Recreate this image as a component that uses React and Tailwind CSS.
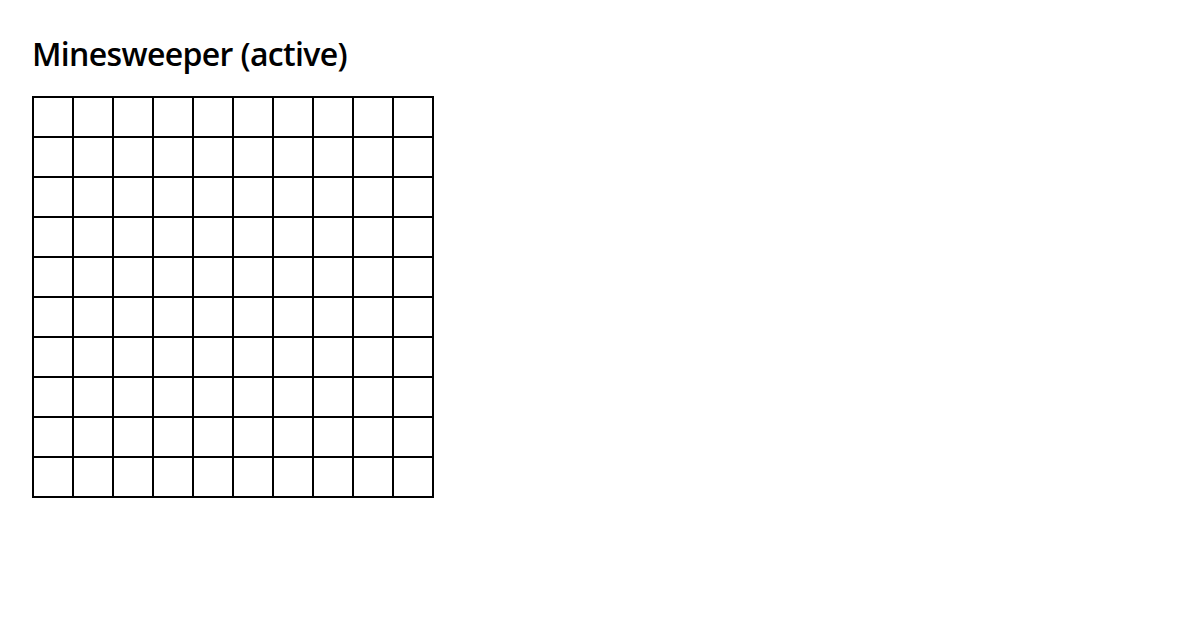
import React from 'react';

export default function App() {
  const cells = Array.from({ length: 100 });
  return (
    <div className="min-h-screen bg-white p-8 pt-[34px] font-['Open_Sans',sans-serif] text-black">
      <h1 className="text-[32px] font-semibold leading-[40px] tracking-[-0.65px]">Minesweeper (active)</h1>
      <div className="mt-[22px] grid w-[402px] grid-cols-10 border-l-2 border-t-2 border-black">
        {cells.map((_, i) => (
          <div key={i} className="h-10 border-b-2 border-r-2 border-black" />
        ))}
      </div>
    </div>
  );
}
